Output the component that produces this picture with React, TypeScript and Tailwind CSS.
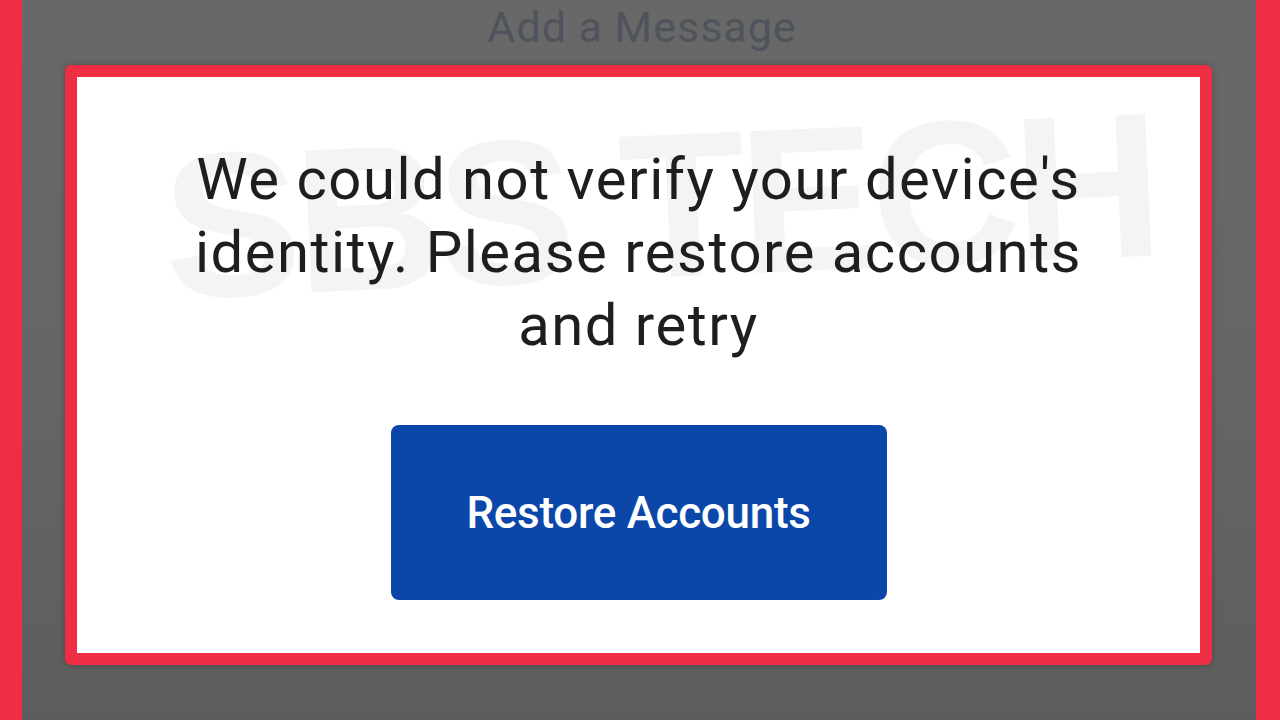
export default function App() {
  return (
    <div className="flex h-[720px] w-[1280px] overflow-hidden bg-[#666666]">
      {/* frame bars */}
      <div className="w-[22px] shrink-0 bg-[#ee2e44]" />

      <div className="flex flex-1 flex-col bg-gradient-to-b from-[#686868] via-[#666666] to-[#5d5d5d]">
        {/* behind the dialog */}
        <div className="flex h-[65px] justify-center pt-[3px]">
          <span
            className="ml-[6px] text-[43px] leading-[48px] tracking-[1px] text-[#4f545c]"
            style={{ fontFamily: "Roboto, 'Liberation Sans', sans-serif" }}
          >
            Add a Message
          </span>
        </div>

        <div className="ml-[43px] mr-[44px] h-[600px] rounded-[6px] border-[12px] border-[#ee2e44] bg-white shadow-[0_0_6px_rgba(0,0,0,0.25)]">
          <div className="relative flex h-full flex-col items-center overflow-hidden pt-[66px]">
            {/* watermark */}
            <div
              aria-hidden="true"
              className="pointer-events-none absolute left-[86px] top-[26px] -rotate-[2.5deg] select-none whitespace-nowrap text-[206px] font-bold leading-none tracking-[-6px] text-[#f4f4f4]"
              style={{ fontFamily: "'Liberation Sans', Arial, sans-serif" }}
            >
              SBS TECH
            </div>

            <p
              className="relative text-center text-[58px] leading-[73px] tracking-[1.5px] text-[#1e1e1e]"
              style={{ fontFamily: "Roboto, 'Liberation Sans', sans-serif" }}
            >
              We could not verify your device's
              <br />
              identity. Please restore accounts
              <br />
              and retry
            </p>

            <button
              className="relative mt-[63px] flex h-[175px] w-[496px] items-center justify-center rounded-[8px] bg-[#0b47a9] text-[44px] font-medium tracking-[-0.3px] text-white"
              style={{ fontFamily: "Roboto, 'Liberation Sans', sans-serif" }}
            >
              Restore Accounts
            </button>
          </div>
        </div>
      </div>

      <div className="w-[24px] shrink-0 bg-[#ee2e44]" />
    </div>
  );
}
